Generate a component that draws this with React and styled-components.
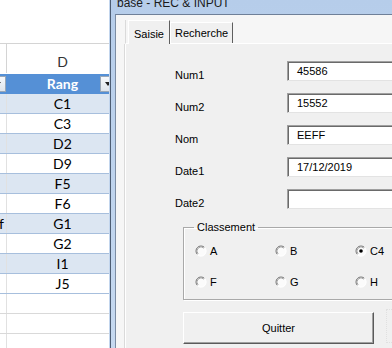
import React from "react";
import styled, { createGlobalStyle } from "styled-components";

const GlobalStyle = createGlobalStyle`
  html, body { margin: 0; padding: 0; background: #fff; }
  body { font-family: "Liberation Sans", Arial, sans-serif; }
`;

// STYLED COMPONENT
const Screen = styled.div`
  display: flex;
  width: 392px;
  height: 348px;
  overflow: hidden;
`;

// --- spreadsheet behind the dialog
const Sheet = styled.section`
  flex: none;
  width: 110px;
  box-sizing: border-box;
  border-right: 1px solid #c3d6ee;
  overflow: hidden;
  background: #fff;
  font-family: Lato, "Liberation Sans", sans-serif;
  font-size: 14px;
  color: #000;
`;
const SheetTop = styled.div`
  width: 118px;
  height: 44px;
  box-sizing: border-box;
  border-bottom: 1px solid #d4d4d4;
`;
const Row = styled.div`
  display: grid;
  grid-template-columns: 7px 111px;
  width: 118px;
  height: ${(p) => p.$h || 20}px;
  box-sizing: border-box;
  background: ${(p) => p.$bg || "#fff"};
  border-bottom: 1px solid ${(p) => p.$line || "transparent"};
`;
const Cell = styled.div`
  position: relative;
  display: flex;
  align-items: ${(p) => (p.$top ? "flex-start" : "center")};
  justify-content: ${(p) => p.$align || "center"};
  padding-top: ${(p) => (p.$top ? "10px" : "0")};
  padding-right: ${(p) => (p.$align === "flex-end" ? "2px" : "0")};
  box-sizing: border-box;
  overflow: hidden;
  line-height: 16px;
  border-right: ${(p) => (p.$divider ? `1px solid ${p.$divider}` : "none")};
  color: ${(p) => p.$color || "#000"};
  font-weight: ${(p) => (p.$bold ? 700 : 400)};
`;
const FilterButton = styled.span`
  position: absolute;
  top: 2px;
  right: ${(p) => p.$right}px;
  width: 16px;
  height: 16px;
  box-sizing: border-box;
  border: 1px solid #9aa7b6;
  background: linear-gradient(180deg, #f7f9fc 0%, #dfe5ec 100%);
  display: grid;
  place-items: center;
  &::after {
    content: "";
    border-left: 3px solid transparent;
    border-right: 3px solid transparent;
    border-top: 4px solid #222;
  }
`;

// --- dialog window
const Window = styled.section`
  flex: 1;
  min-width: 0;
  display: flex;
  flex-direction: column;
  border-left: 1px solid #4d5d73;
  padding-left: 4px;
  background: linear-gradient(180deg, #b6cdea 0%, #c6d9f0 100%);
`;
const TitleBar = styled.div`
  flex: none;
  height: 14px;
  padding-left: 2px;
  overflow: hidden;
  font-size: 12px;
  line-height: 12px;
  color: #1b1b1b;
`;
const TitleText = styled.span`
  display: block;
  margin-top: -3px;
  white-space: nowrap;
`;
const Client = styled.div`
  flex: 1;
  display: flex;
  flex-direction: column;
  border-left: 1px solid #7b8ca3;
  border-top: 1px solid #6f8098;
  background: #f6f6f6;
  padding: 5px 0 0 9px;
  font-size: 11px;
  color: #000;
`;
const TabStrip = styled.div`
  flex: none;
  display: flex;
  align-items: flex-end;
  height: 23px;
  padding-left: 2px;
  border-bottom: 1px solid #fff;
  border-left: 1px solid #dadada;
`;
const Tab = styled.div`
  height: ${(p) => (p.$active ? 24 : 21)}px;
  margin-bottom: ${(p) => (p.$active ? "-1px" : "0")};
  padding: ${(p) => (p.$active ? "2px" : "0")} ${(p) => p.$pad}px 0;
  box-sizing: border-box;
  display: flex;
  align-items: center;
  background: #f0f0f0;
  border-top: 1px solid #fff;
  border-left: 1px solid #fff;
  border-right: 1px solid #5f5f5f;
  white-space: nowrap;
`;
const Page = styled.div`
  flex: 1;
  display: flex;
  flex-direction: column;
  align-items: flex-start;
  gap: 12px;
  background: #f0f0f0;
  border-left: 1px solid #fff;
  box-shadow: -1px 0 0 #dadada;
  padding: 17px 0 0 49px;
`;
const FieldRow = styled.div`
  display: grid;
  grid-template-columns: 112px 140px;
  height: 20px;
`;
const FieldLabel = styled.label`
  padding-top: 8px;
  line-height: 13px;
`;
const TextBox = styled.div`
  height: 20px;
  box-sizing: border-box;
  background: #fff;
  border-top: 1px solid #a0a0a0;
  border-left: 1px solid #a0a0a0;
  border-bottom: 1px solid #e3e3e3;
  box-shadow: inset 1px 1px 0 #6a6a6a;
  padding-left: 9px;
  line-height: 18px;
  white-space: nowrap;
`;
const Frame = styled.fieldset`
  margin: 0 0 0 8px;
  padding: 10px 0 10px 11px;
  width: 260px;
  border: 1px solid #a9a9a9;
  box-shadow: inset 1px 1px 0 #fff, 1px 1px 0 #fff;
  display: grid;
  grid-template-columns: repeat(3, 80px);
  row-gap: 17px;
`;
const Legend = styled.legend`
  margin-left: -1px;
  padding: 0 3px;
  line-height: 13px;
  font-size: 11px;
`;
const Option = styled.div`
  display: flex;
  align-items: center;
  gap: 3px;
  height: 14px;
  line-height: 14px;
`;
const ButtonRow = styled.div`
  display: flex;
  gap: 12px;
  margin-left: 8px;
`;
const Button = styled.button`
  width: 191px;
  height: 32px;
  box-sizing: border-box;
  background: #f0f0f0;
  border: none;
  border-top: 1px solid #fff;
  border-left: 1px solid #fff;
  border-right: 1px solid #5a5a5a;
  border-bottom: 1px solid #5a5a5a;
  box-shadow: inset -1px -1px 0 #a0a0a0;
  font-family: "Liberation Sans", Arial, sans-serif;
  font-size: 11px;
  color: #000;
  padding: 0;
`;
const GhostButton = styled.div`
  width: 60px;
  height: 34px;
  margin-top: -3px;
  box-sizing: border-box;
  border: 1px dotted #e0e0e0;
  border-right: none;
`;

const RadioIcon = ({ checked }) => (
  <svg width="12" height="12" viewBox="0 0 12 12">
    <circle cx="6" cy="6" r="5.5" fill="#fbfbfb" />
    <path d="M2.46 9.54 A5 5 0 0 1 9.54 2.46" stroke="#6e6e6e" fill="none" />
    <path d="M3.17 8.83 A4 4 0 0 1 8.83 3.17" stroke="#a8a8a8" fill="none" />
    <path d="M9.54 2.46 A5 5 0 0 1 2.46 9.54" stroke="#ffffff" fill="none" />
    {checked && <circle cx="6" cy="6" r="1.8" fill="#000" />}
  </svg>
);

const rows = [
  { c: "", d: "C1" },
  { c: "", d: "C3" },
  { c: "", d: "D2" },
  { c: "", d: "D9" },
  { c: "", d: "F5" },
  { c: "", d: "F6" },
  { c: "f", d: "G1" },
  { c: "", d: "G2" },
  { c: "", d: "I1" },
  { c: "", d: "J5" },
];

const fields = [
  { label: "Num1", value: "45586" },
  { label: "Num2", value: "15552" },
  { label: "Nom", value: "EEFF" },
  { label: "Date1", value: "17/12/2019" },
  { label: "Date2", value: "" },
];

const options = [
  { label: "A" },
  { label: "B" },
  { label: "C4", checked: true },
  { label: "F" },
  { label: "G" },
  { label: "H" },
];

// JSX STRUCTURE COMPONENT
const App = () => {
  return (
    <Screen>
      <GlobalStyle />
      <Sheet>
        <SheetTop />
        <Row $h={30}>
          <Cell $divider="#d4d4d4" />
          <Cell $top $color="#333">D</Cell>
        </Row>
        <Row $bg="#5590d6">
          <Cell>
            <FilterButton $right={1} />
          </Cell>
          <Cell $bold $color="#fff">
            Rang
            <FilterButton $right={2} />
          </Cell>
        </Row>
        {rows.map((r, i) => (
          <Row key={r.d} $bg={i % 2 === 0 ? "#dce6f2" : "#fff"} $line="#a7bfdd">
            <Cell $divider="#e1e1e1" $align="flex-end">{r.c}</Cell>
            <Cell>{r.d}</Cell>
          </Row>
        ))}
        {[0, 1, 2].map((i) => (
          <Row key={i} $line="#d9d9d9">
            <Cell $divider="#e1e1e1" />
            <Cell />
          </Row>
        ))}
      </Sheet>

      <Window>
        <TitleBar>
          <TitleText>base - REC &amp; INPUT</TitleText>
        </TitleBar>
        <Client>
          <TabStrip>
            <Tab $active $pad={5}>Saisie</Tab>
            <Tab $pad={4}>Recherche</Tab>
          </TabStrip>
          <Page>
            {fields.map((f) => (
              <FieldRow key={f.label}>
                <FieldLabel>{f.label}</FieldLabel>
                <TextBox>{f.value}</TextBox>
              </FieldRow>
            ))}
            <Frame>
              <Legend>Classement</Legend>
              {options.map((o) => (
                <Option key={o.label}>
                  <RadioIcon checked={o.checked} />
                  {o.label}
                </Option>
              ))}
            </Frame>
            <ButtonRow>
              <Button>Quitter</Button>
              <GhostButton />
            </ButtonRow>
          </Page>
        </Client>
      </Window>
    </Screen>
  );
};

export default App;
